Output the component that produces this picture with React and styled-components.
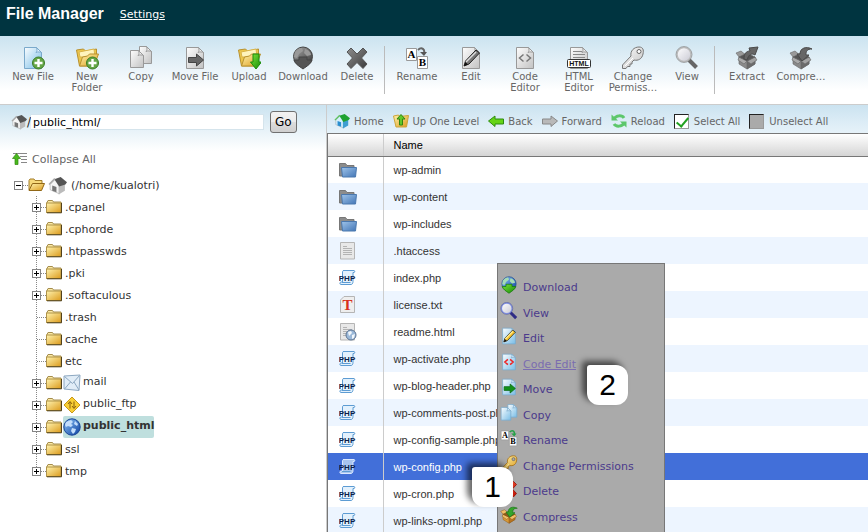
import React from 'react';
import styled, { createGlobalStyle } from 'styled-components';

const GlobalStyle = createGlobalStyle`
    * { box-sizing: border-box; }
    body {
        margin: 0;
        background: #fff;
        color: #333;
        font-family: Verdana, "DejaVu Sans", sans-serif;
        font-size: 11px;
    }
    button, input {
        font-family: inherit;
    }
`;

const Page = styled.div`
    display: flex;
    flex-direction: column;
    height: 100vh;
    overflow: hidden;
`;

const Header = styled.header`
    display: flex;
    flex: none;
    align-items: center;
    gap: 16px;
    height: 36px;
    padding: 0 6px 8px;
    background: #003440;
    a {
        color: #fff;
    }
`;

const Title = styled.h1`
    margin: 0;
    color: #fff;
    font-family: "Liberation Sans", Arial, sans-serif;
    font-size: 16px;
    line-height: 20px;
`;

const Toolbar = styled.div`
    display: flex;
    flex: none;
    height: 69px;
    padding: 10px 6px 0;
    border-bottom: 1px solid #ccc;
    background: linear-gradient(#cbe3f0, #fff 80%);
`;

const ToolButton = styled.button`
    display: flex;
    flex: none;
    flex-direction: column;
    align-items: center;
    width: 54px;
    height: 48px;
    padding: 0;
    border: 0;
    background: none;
    color: #666;
    font-size: 10px;
    line-height: 11px;
    white-space: pre;
    cursor: pointer;
    svg {
        flex: none;
        margin-bottom: 1px;
    }
`;

const Separator = styled.span`
    width: 1px;
    height: 48px;
    margin-right: 5px;
    background: #bbb;
`;

const Main = styled.main`
    display: flex;
    flex: 1;
    min-height: 0;
`;

const Sidebar = styled.aside`
    flex: none;
    width: 326px;
    background: linear-gradient(#cbe3f0, #fff 46px);
`;

const PathForm = styled.form`
    display: flex;
    align-items: center;
    gap: 6px;
    height: 34px;
    padding-left: 11px;
    font-size: 12px;
    color: #222;
    label {
        display: flex;
        align-items: center;
    }
`;

const PathInput = styled.input`
    width: 233px;
    height: 16px;
    padding: 0 2px;
    border: 1px solid #d5e4ec;
    border-width: 1px 1px 1px 0;
    background: #fff;
    color: #000;
    font-size: 11px;
`;

const GoButton = styled.button`
    height: 22px;
    padding: 0 4px;
    border: 1px solid #707070;
    border-radius: 3px;
    background: linear-gradient(#f2f2f2, #ebebeb 50%, #ddd 50%, #cfcfcf);
    color: #000;
    font-size: 12px;
`;

const CollapseButton = styled.button`
    display: flex;
    align-items: center;
    gap: 4px;
    height: 16px;
    margin: 12px 0 7px 12px;
    padding: 0;
    border: 0;
    background: none;
    color: #666;
    font-size: 11px;
`;

const Tree = styled.ul`
    margin: 0;
    padding: 0 0 0 14px;
    list-style: none;
    ul {
        position: relative;
        margin: 0;
        padding: 0 0 0 18px;
        list-style: none;
    }
    ul::before {
        content: "";
        position: absolute;
        left: 22px;
        top: 0;
        bottom: 11px;
        border-left: 1px dotted #888;
    }
`;

const TreeRow = styled.div`
    position: relative;
    display: flex;
    align-items: center;
    height: 22px;
`;

const Toggle = styled.button`
    display: flex;
    align-items: center;
    justify-content: center;
    width: 9px;
    height: 9px;
    padding: 0;
    border: 1px solid #848484;
    background: #fff;
    visibility: ${props => (props.$hidden ? 'hidden' : 'visible')};
`;

const Branch = styled.span`
    width: ${props => (props.$leaf ? 9 : 5)}px;
    margin-left: ${props => (props.$leaf ? -4 : 0)}px;
    border-top: 1px dotted #888;
`;

const TreeLabel = styled.a`
    display: flex;
    align-items: center;
    height: 22px;
    margin-left: 1px;
    padding-left: ${props => (props.$icon ? 0 : 2)}px;
    border-radius: 2px;
    background: ${props => (props.$current ? '#bfdfde' : 'transparent')};
    color: #333;
    font-weight: ${props => (props.$current ? 'bold' : 'normal')};
    text-decoration: none;
    white-space: nowrap;
    svg {
        margin-right: 2px;
    }
    span {
        padding-bottom: ${props => (props.$icon ? 4 : 0)}px;
    }
`;

const RootLabel = styled.a`
    display: flex;
    align-items: center;
    gap: 4px;
    margin-left: 3px;
    color: #333;
    text-decoration: none;
`;

const Content = styled.section`
    position: relative;
    display: flex;
    flex: 1;
    flex-direction: column;
    min-width: 0;
    border-left: 1px solid #ccc;
`;

const ActionBar = styled.div`
    display: flex;
    flex: none;
    align-items: center;
    gap: 9px;
    height: 28px;
    padding: 4px 7px 0;
    background: linear-gradient(#cbe3f0, #dcecf6 60%, #e6f2f9);
    color: #666;
    font-size: 10px;
`;

const Action = styled.button`
    display: flex;
    flex: none;
    align-items: center;
    gap: 4px;
    padding: 0;
    border: 0;
    background: none;
    color: #666;
    font-size: 10px;
    white-space: nowrap;
`;

const CheckLabel = styled.label`
    display: flex;
    flex: none;
    align-items: center;
    gap: 5px;
    white-space: nowrap;
`;

const CheckBox = styled.input`
    appearance: none;
    position: relative;
    width: 15px;
    height: 15px;
    margin: 0;
    border: 1px solid;
    border-color: #222 #999 #999 #222;
    background: ${props => (props.$blank ? '#aaa' : '#fff')};
    &:checked::after {
        content: "";
        position: absolute;
        left: 4px;
        top: 0;
        width: 5px;
        height: 10px;
        border: solid #21a121;
        border-width: 0 2px 2px 0;
        transform: rotate(40deg);
    }
`;

const ListArea = styled.div`
    flex: 1;
    min-height: 0;
    overflow: hidden;
    border-top: 1px solid #777;
    border-left: 1px solid #777;
`;

const FileTable = styled.table`
    width: 100%;
    border-collapse: collapse;
    table-layout: fixed;
    font-family: "Liberation Sans", Arial, sans-serif;
    font-size: 11px;
    th, td {
        padding: 0 10px;
        text-align: left;
        font-weight: normal;
    }
    th:first-child, td:first-child {
        width: 55px;
        padding-left: 11px;
        border-right: 1px solid #ccc;
    }
    th {
        height: 22px;
        border-bottom: 1px solid #777;
        color: #000;
    }
    thead {
        background: linear-gradient(#fff, #d5d5d5);
    }
    svg {
        display: block;
    }
`;

const FileRow = styled.tr`
    height: 27px;
    background: #fff;
    color: #333;
    &:nth-child(even) {
        background: #edf5ff;
    }
    &&[aria-selected="true"] {
        background: #426fd9;
        color: #fff;
    }
`;

const ContextMenu = styled.ul`
    position: absolute;
    left: 170px;
    top: 158px;
    width: 168px;
    margin: 0;
    padding: 12px 2px 20px;
    border: 1px solid #777;
    background: #aaa;
    list-style: none;
    li {
        height: 26px;
    }
    li:nth-child(even) {
        height: 25px;
    }
`;

const MenuLink = styled.a`
    display: flex;
    align-items: flex-start;
    gap: 5px;
    color: ${props => (props.$active ? '#7a6db0' : '#4b3a8c')};
    text-decoration: ${props => (props.$active ? 'underline' : 'none')};
    line-height: 20px;
    white-space: nowrap;
    span {
        padding-top: 2px;
    }
`;

const Marker = styled.div`
    position: absolute;
    left: ${props => props.$x}px;
    top: ${props => props.$y}px;
    width: 41px;
    height: 40px;
    border-radius: 3px 12px 12px 12px;
    background: #fff;
    box-shadow: -5px -4px 6px rgba(0, 0, 0, 0.6);
    color: #000;
    font-family: "Liberation Sans", Arial, sans-serif;
    font-size: 30px;
    line-height: 40px;
    text-align: center;
`;

/* ---------- icons ---------- */

const Svg = ({ size = 24, box = 24, children }) => (
    <svg width={size} height={size} viewBox={`0 0 ${box} ${box}`} aria-hidden="true">{children}</svg>
);

const Gradient = ({ id, from, to }) => (
    <linearGradient id={id} x1="0" y1="0" x2="1" y2="1">
        <stop offset="0" stopColor={from} />
        <stop offset="1" stopColor={to} />
    </linearGradient>
);

const IconDefs = styled.svg`
    position: absolute;
`;

const Defs = () => (
    <IconDefs width="0" height="0" aria-hidden="true">
        <defs>
            <Gradient id="grayPage" from="#fdfdfd" to="#c2c2c2" />
            <Gradient id="bluePage" from="#fafdff" to="#79bde6" />
            <Gradient id="yellow" from="#fff3ae" to="#dc9b1c" />
            <Gradient id="blueFolder" from="#9fc4ea" to="#4275b5" />
            <Gradient id="grayBall" from="#aaa" to="#333" />
            <Gradient id="blueBall" from="#8fc7fa" to="#0a3d9e" />
            <Gradient id="green" from="#7be338" to="#168a08" />
            <Gradient id="dark" from="#8e8e8e" to="#3c3c3c" />
            <Gradient id="red" from="#ff6a48" to="#c00d00" />
            <Gradient id="lens" from="#fff" to="#c9c9d4" />
        </defs>
    </IconDefs>
);

const Sheet = ({ color, x = 3, y = 1, w = 18, h = 22 }) => (
    <g stroke={color ? '#7aa9cb' : '#999'} strokeWidth="1" strokeLinejoin="round">
        <path
            d={`M${x + 0.5} ${y + 0.5}h${w - 6}l5 5v${h - 6}h${1 - w}z`}
            fill={color ? 'url(#bluePage)' : 'url(#grayPage)'}
        />
        <path d={`M${x + w - 5.5} ${y + 0.5}c1 2 .5 4 -.5 5c2 -1 4 -.5 5.500 0z`} fill={color ? '#e4f4ff' : '#eee'} />
    </g>
);

const OpenFolder = () => (
    <g strokeLinejoin="round" stroke="#b8912f">
        <path d="M1.500 4l7-1 2 2 11-2v8l-3 9h-14z" fill="#edc64b" />
        <path d="M4 6l15-3 1 8H5z" fill="#fff4bd" stroke="#d9b44a" />
        <path d="M4.500 20l3-9 5-1 2-2h9l-4.500 12z" fill="url(#yellow)" />
    </g>
);

const PlusBadge = () => (
    <g>
        <circle cx="17.500" cy="17" r="6" fill="#65a646" stroke="#397c24" />
        <path d="M17.500 13v8M13.500 17h8" stroke="#fff" strokeWidth="2.400" />
    </g>
);

const Pencil = ({ color }) => (
    <g strokeLinejoin="round">
        <path d="M5 20l1.500-5L17 4l3.500 3L10 18z" fill={color ? '#f8c42e' : '#777'} stroke="#222" />
        <path d="M7 16l10-10" stroke={color ? '#fff09b' : '#ddd'} strokeWidth="1.500" />
        <path d="M5 20l1.500-4 2.500 2.500z" fill="#111" />
    </g>
);

const NewFileIcon = () => <Svg><Sheet color /><PlusBadge /></Svg>;
const NewFolderIcon = () => <Svg><OpenFolder /><PlusBadge /></Svg>;
const CopyIcon = ({ color, size }) => (
    <Svg size={size}>
        <Sheet color={color} x={10} y={0} w={13} h={18} />
        <Sheet color={color} x={1} y={4} w={14} h={18} />
    </Svg>
);
const MoveIcon = ({ color, size }) => (
    <Svg size={size}>
        <Sheet color={color} />
        <path d="M5.500 11.500h8v-3.500l7 6-7 6v-3.500h-8z" fill={color ? '#12921b' : '#666'} stroke={color ? '#0a6810' : '#444'} />
    </Svg>
);
const UploadIcon = () => (
    <Svg>
        <OpenFolder />
        <path d="M16 8h6v8h2.500l-5.500 7-5.500-7H16z" fill="url(#green)" stroke="#1d8b0c" />
    </Svg>
);
const DownloadIcon = ({ color, size }) => (
    <Svg size={size}>
        <circle cx="12" cy="10.500" r="9.500" fill={color ? 'url(#blueBall)' : 'url(#grayBall)'} stroke={color ? '#24508e' : '#444'} />
        <path d="M4 6c3-4 6-4 7-4l1 3-4 3-2 4-3-1zM14 3c4 1 6 4 6 6l-4 1-3-3z" fill={color ? '#a6dcb4' : '#999'} />
        <path d="M3 14h5v-3h8v3h5c-1 4-5 6-9 9c-4-3-8-5-9-9z" fill={color ? 'url(#green)' : '#555'} stroke={color ? '#167a0c' : '#444'} />
    </Svg>
);
const DeleteIcon = ({ color, size }) => (
    <Svg size={size}>
        <path
            d="M6 2l6 6 6-6 4 4-5.500 6 5.500 6-4 4.500-6-6-6 6L2 18l5.500-6L2 6z"
            fill={color ? 'url(#red)' : 'url(#dark)'} stroke={color ? '#8e0b00' : '#555'} strokeLinejoin="round"
        />
    </Svg>
);
const RenameIcon = ({ color, size }) => (
    <Svg size={size}>
        <path d="M1.500 2.500h10v12h-10zM12.500 10.500h10v12h-10z" fill="#fff" stroke="#999" />
        <path d="M13 4c4-4 7 0 6 3" fill="none" stroke={color ? '#25a246' : '#666'} strokeWidth="2" />
        <path d="M15 6h7l-3 4z" fill={color ? '#25a246' : '#555'} />
        <g fontFamily="Liberation Serif, serif" fontWeight="bold" fontSize="11" textAnchor="middle" fill="#000">
            <text x="6.500" y="12">A</text>
            <text x="17.500" y="20">B</text>
        </g>
    </Svg>
);
const EditIcon = ({ color, size }) => <Svg size={size}><Sheet color={color} /><Pencil color={color} /></Svg>;
const CodeIcon = ({ color, size }) => (
    <Svg size={size}>
        <Sheet color={color} />
        <path d="M10.500 8.500l-4 3.500 4 3.500M13.500 8.500l4 3.500-4 3.500" fill="none" stroke={color ? '#e22' : '#777'} strokeWidth={color ? 2 : 1.500} />
    </Svg>
);
const HtmlIcon = () => (
    <Svg>
        <Sheet />
        <path d="M6 5.500h9M6 8.500h12M6 11.500h12" stroke="#888" />
        <rect x=".5" y="13.500" width="23" height="8" rx="1" fill="#fff" stroke="#333" />
        <text x="12" y="20" textAnchor="middle" fontFamily="Liberation Sans, sans-serif" fontWeight="bold" fontSize="7" fill="#111">HTML</text>
    </Svg>
);
const KeyIcon = ({ color, size }) => (
    <Svg size={size}>
        <path
            d="M10 10c-1-5 3-9 8-9 4 0 5 3 4 7-1 5-5 7-9 6l-2 2v2H9v2.500H6.500L5 22.500H1.500V19z"
            fill={color ? 'url(#yellow)' : 'url(#grayPage)'} stroke={color ? '#a26a0c' : '#777'} strokeLinejoin="round"
        />
        <circle cx="18" cy="5.500" r="2" fill={color ? '#aaa' : '#fff'} stroke="#666" />
        <path d="M4 20l8-8" stroke={color ? '#fff0a0' : '#fff'} />
    </Svg>
);
const ViewIcon = ({ color, size }) => (
    <Svg size={size}>
        <path d="M14 14l7.500 7.500" stroke={color ? '#2f2c85' : '#666'} strokeWidth="4" />
        <circle cx="9" cy="8.500" r="7" fill="url(#lens)" stroke={color ? '#8292e6' : '#bbb'} strokeWidth="1.500" />
        <circle cx="9" cy="8.500" r="8" fill="none" stroke={color ? '#4b55a0' : '#888'} strokeWidth=".7" />
    </Svg>
);
const BoxIcon = ({ color, out, size }) => (
    <Svg size={size}>
        <g strokeLinejoin="round" strokeWidth=".6" stroke={color ? '#875311' : '#666'}>
            <path d="M4 11l8 4 8-4v7l-8 5-8-5z" fill={color ? '#d89a38' : '#8a8a8a'} />
            <path d="M12 15l8-4v7l-8 5z" fill={color ? '#b87420' : '#6b6b6b'} />
            <path d="M4 11L1 7l5-2 6 5z" fill={color ? '#f0be68' : '#999'} />
            <path d="M4 11l-1 3 6 4 3-3z" fill={color ? '#f0be68' : '#aaa'} />
            <path d="M20 11l2 3-6 4-4-3z" fill={color ? '#f0be68' : '#a2a2a2'} />
            <path d="M4 11l8-4 8 4-8 4z" fill={color ? '#8d5a1a' : '#555'} />
        </g>
        {out
            ? <path d="M9 13c0-5 2-8 6-8l-1-3 9-1-3 8-2-1c-4 0-5 3-6 6z" fill="#666" stroke="#4a4a4a" />
            : <path d="M23 3c-5 0-6 2-6 6h3l-7 6-5-7h3c0-6 6-8 12-5z" fill={color ? '#35a52c' : '#666'} stroke={color ? '#1c7b18' : '#4a4a4a'} />}
    </Svg>
);

const HouseIcon = ({ size = 18, color }) => (
    <Svg size={size} box={18}>
        <path d="M2 8l5-5 4 5v9l-9-4z" fill={color ? '#d4effc' : '#f5f5f5'} stroke="#999" strokeWidth=".5" />
        <path d="M10 9l6-2v7l-6 3.500z" fill={color ? '#3f9ed0' : '#bbb'} />
        <path d="M4 9l4 1.500v5L4 14z" fill={color ? '#2a8ed0' : '#777'} />
        <path d="M6 3l6-2 6 5-1.500 2-6 2z" fill={color ? '#1fa331' : '#555'} />
        <path d="M6.500 2.500L1 8" stroke={color ? '#5cc45f' : '#aaa'} strokeWidth="1.500" />
    </Svg>
);

const FolderIcon = () => (
    <svg width="16" height="14" viewBox="0 0 16 14" aria-hidden="true">
        <path d="M1 2.500l1-2h4.500l1 1.500H15v2H1z" fill="#fbe9a4" stroke="#a58d4e" />
        <rect x=".5" y="3" width="14.500" height="9.500" fill="url(#yellow)" stroke="#b09349" />
        <path d="M1 12.800h14.500V3" fill="none" stroke="#51411b" />
    </svg>
);

const OpenFolderSmall = () => (
    <svg width="17" height="14" viewBox="0 0 17 14" aria-hidden="true">
        <path d="M1 12V2.500l1-1.500h4l1 1.500h7V6" fill="#f6d97a" stroke="#a37d2b" />
        <path d="M1 12.500L4.500 5.500h12L13.500 12.500z" fill="url(#yellow)" stroke="#916716" strokeLinejoin="round" />
    </svg>
);

const MailIcon = () => (
    <Svg size={18} box={18}>
        <path d="M1 2l16-1-1 15.500L1 15z" fill="#e1edf7" stroke="#8da8c1" />
        <path d="M1.500 2.500l8 7L16.500 1.500M1.500 15l6-7M16 16l-5-8" fill="none" stroke="#8da8c1" />
    </Svg>
);
const FtpIcon = () => (
    <Svg size={18} box={18}>
        <path d="M9 1l8 8-8 8-8-8z" fill="#f9cf36" stroke="#c89818" strokeLinejoin="round" />
        <path d="M7 12.500V6M5 8l2-2.500L9 8M11 5.500V12M9 10l2 2.500 2-2.500" fill="none" stroke="#8a5f0b" />
    </Svg>
);
const GlobeIcon = () => (
    <Svg size={18} box={18}>
        <circle cx="9" cy="9" r="8.200" fill="url(#blueBall)" stroke="#174395" />
        <path d="M3 4l5-2 2 2-2 2 2 1-2 2-3-1-2 1-1-2zM9 10l4 1-1 3-2 2-2-3zM12 3l3 3-1 2-3-2z" fill="#c4defc" />
    </Svg>
);

const BlueFolderIcon = () => (
    <svg width="18" height="16" viewBox="0 0 18 16" aria-hidden="true">
        <path d="M.5 14V1.500h6l1.500 2h7V14z" fill="#8c8c8c" stroke="#777" />
        <path d="M2.500 5.500h15l-1 9.500h-13z" fill="url(#blueFolder)" stroke="#4a78ae" />
    </svg>
);
const PhpIcon = ({ selected }) => (
    <Svg size={17} box={17}>
        <path d="M4 1.500h11c1 0 1 2 0 2h-1v9c0 2-1 3-2 3H2c-1.500 0-1.500-2.500 0-2.500h1.500V3c0-1 .5-1.500 1.500-1.500z" fill={selected ? '#a8c4ef' : '#e3f1fd'} stroke={selected ? '#dbe8ff' : '#5d9cd3'} />
        <path d="M3 13.500h8.500" stroke="#5d9cd3" />
        <text x="8" y="11.500" textAnchor="middle" fontFamily="Liberation Sans, sans-serif" fontWeight="bold" fontSize="8" fill="#0b1d4b">PHP</text>
    </Svg>
);
const TextIcon = () => (
    <Svg size={17} box={17}>
        <path d="M5 .5h10.500v16H1.500V4z" fill="#eee" stroke="#b5b5b5" />
        <text x="8.500" y="14" textAnchor="middle" fontFamily="Liberation Serif, serif" fontWeight="bold" fontSize="15" fill="#d9301a">T</text>
    </Svg>
);
const LinesIcon = ({ globe }) => (
    <Svg size={18} box={18}>
        <path d="M1.500 .5h14v16.500h-14z" fill="#e8e8e8" stroke="#b5b5b5" />
        <path d="M4 4.500h4M4 6.500h9M4 8.500h9M4 10.500h9M4 12.500h9" stroke="#b3b3b3" />
        {globe && <circle cx="12" cy="12" r="5" fill="#9bb9d9" stroke="#5d7594" />}
        {globe && <path d="M9 9l3-1 1 2-3 3zM13 12l3-1-1 4-2 1z" fill="#f1f6fb" />}
    </Svg>
);

const ArrowIcon = ({ back }) => (
    <Svg size={16} box={16}>
        {back
            ? <path d="M.5 8L7 3v3h8.500v5H7v2.500z" fill="#65d416" stroke="#2e8b0f" strokeLinejoin="round" />
            : <path d="M15.500 8L9 3v3H.5v5H9v2.500z" fill="#b9b9b9" stroke="#888" strokeLinejoin="round" />}
    </Svg>
);
const UpIcon = () => (
    <Svg size={16} box={16}>
        <path d="M.5 3l5-1 1 1.500 9-1-2 11.500H3z" fill="url(#yellow)" stroke="#cda53a" />
        <path d="M8 1.500l4 4.500H9.500v6h-3V6H4z" fill="#61c926" stroke="#308512" />
    </Svg>
);
const ReloadIcon = () => (
    <Svg size={16} box={16}>
        <path d="M3 6c2-4 8-4 10-1M13 10c-2 4-8 4-10 1" fill="none" stroke="#5dc76b" strokeWidth="3" />
        <path d="M.5 1.500L7 7.500H.5zM15.500 14.500L9 8.500h6.500z" fill="#5dc76b" />
    </Svg>
);
const CollapseIcon = () => (
    <Svg size={16} box={16}>
        <path d="M1 2.500h14M8 5.500h7M9 8.500h6M9 11.500h6" stroke="#888" />
        <path d="M4.500 2.500l4 5H6v6H3v-6H.5z" fill="#49b91c" stroke="#32870f" strokeWidth=".7" />
    </Svg>
);

/* ---------- data ---------- */

const tools = [
    [
        { label: 'New File', icon: <NewFileIcon /> },
        { label: 'New\nFolder', icon: <NewFolderIcon /> },
        { label: 'Copy', icon: <CopyIcon /> },
        { label: 'Move File', icon: <MoveIcon /> },
        { label: 'Upload', icon: <UploadIcon /> },
        { label: 'Download', icon: <DownloadIcon /> },
        { label: 'Delete', icon: <DeleteIcon /> }
    ],
    [
        { label: 'Rename', icon: <RenameIcon /> },
        { label: 'Edit', icon: <EditIcon /> },
        { label: 'Code\nEditor', icon: <CodeIcon /> },
        { label: 'HTML\nEditor', icon: <HtmlIcon /> },
        { label: 'Change\nPermiss…', icon: <KeyIcon /> },
        { label: 'View', icon: <ViewIcon /> }
    ],
    [
        { label: 'Extract', icon: <BoxIcon out /> },
        { label: 'Compre…', icon: <BoxIcon /> }
    ]
];

const folders = [
    { name: '.cpanel' },
    { name: '.cphorde' },
    { name: '.htpasswds' },
    { name: '.pki' },
    { name: '.softaculous' },
    { name: '.trash', leaf: true },
    { name: 'cache', leaf: true },
    { name: 'etc', leaf: true },
    { name: 'mail', icon: <MailIcon /> },
    { name: 'public_ftp', icon: <FtpIcon /> },
    { name: 'public_html', icon: <GlobeIcon />, current: true },
    { name: 'ssl' },
    { name: 'tmp' }
];

const actions = [
    { label: 'Home', icon: <HouseIcon size={16} color /> },
    { label: 'Up One Level', icon: <UpIcon /> },
    { label: 'Back', icon: <ArrowIcon back /> },
    { label: 'Forward', icon: <ArrowIcon /> },
    { label: 'Reload', icon: <ReloadIcon /> }
];

const files = [
    'wp-admin', 'wp-content', 'wp-includes', '.htaccess', 'index.php', 'license.txt', 'readme.html',
    'wp-activate.php', 'wp-blog-header.php', 'wp-comments-post.php', 'wp-config-sample.php',
    'wp-config.php', 'wp-cron.php', 'wp-links-opml.php'
];

const menu = [
    { label: 'Download', Icon: DownloadIcon },
    { label: 'View', Icon: ViewIcon },
    { label: 'Edit', Icon: EditIcon },
    { label: 'Code Edit', Icon: CodeIcon },
    { label: 'Move', Icon: MoveIcon },
    { label: 'Copy', Icon: CopyIcon },
    { label: 'Rename', Icon: RenameIcon },
    { label: 'Change Permissions', Icon: KeyIcon },
    { label: 'Delete', Icon: DeleteIcon },
    { label: 'Compress', Icon: BoxIcon }
];

const getFileIcon = (name, selected) => {
    if (name.endsWith('.php')) return <PhpIcon selected={selected} />;
    if (name.endsWith('.txt')) return <TextIcon />;
    if (name.endsWith('.html')) return <LinesIcon globe />;
    if (name === '.htaccess') return <LinesIcon />;
    return <BlueFolderIcon />;
};

const ToggleSign = ({ open }) => (
    <svg width="7" height="7" viewBox="0 0 7 7" aria-hidden="true">
        <path d={open ? 'M1 3.500h5' : 'M1 3.500h5M3.500 1v5'} stroke="#000" />
    </svg>
);

const FolderTree = () => (
    <Tree>
        <li>
            <TreeRow>
                <Toggle type="button" aria-label="Collapse home"><ToggleSign open /></Toggle>
                <Branch />
                <OpenFolderSmall />
                <RootLabel href="#home"><HouseIcon size={19} />(/home/kualotri)</RootLabel>
            </TreeRow>
            <ul>
                {folders.map(item => (
                    <li key={item.name}>
                        <TreeRow>
                            <Toggle type="button" $hidden={item.leaf} aria-label={'Expand ' + item.name}><ToggleSign /></Toggle>
                            <Branch $leaf={item.leaf} />
                            <FolderIcon />
                            <TreeLabel href={'#' + item.name} $icon={!!item.icon} $current={item.current}>
                                {item.icon}<span>{item.name}</span>
                            </TreeLabel>
                        </TreeRow>
                    </li>
                ))}
            </ul>
        </li>
    </Tree>
);

const App = () => {
    const [selected, setSelected] = React.useState('wp-config.php');
    const [path, setPath] = React.useState('public_html/');

    return <Page>
        <GlobalStyle />
        <Defs />
        <Header>
            <Title>File Manager</Title>
            <a href="#settings">Settings</a>
        </Header>
        <Toolbar>
            {tools.map((group, i) => (
                <React.Fragment key={i}>
                    {i > 0 && <Separator />}
                    {group.map(tool => (
                        <ToolButton key={tool.label} type="button">{tool.icon}{tool.label}</ToolButton>
                    ))}
                </React.Fragment>
            ))}
        </Toolbar>
        <Main>
            <Sidebar>
                <PathForm onSubmit={e => e.preventDefault()}>
                    <label>
                        <HouseIcon size={16} />/
                        <PathInput aria-label="Path" value={path} onChange={e => setPath(e.target.value)} />
                    </label>
                    <GoButton type="submit">Go</GoButton>
                </PathForm>
                <CollapseButton type="button"><CollapseIcon />Collapse All</CollapseButton>
                <FolderTree />
            </Sidebar>
            <Content>
                <ActionBar>
                    {actions.map(item => (
                        <Action key={item.label} type="button">{item.icon}{item.label}</Action>
                    ))}
                    <CheckLabel><CheckBox type="checkbox" defaultChecked />Select All</CheckLabel>
                    <CheckLabel><CheckBox type="checkbox" $blank />Unselect All</CheckLabel>
                </ActionBar>
                <ListArea>
                    <FileTable>
                        <thead>
                            <tr><th aria-label="Type" /><th>Name</th></tr>
                        </thead>
                        <tbody>
                            {files.map(name => (
                                <FileRow key={name} aria-selected={name === selected} onClick={() => setSelected(name)}>
                                    <td>{getFileIcon(name, name === selected)}</td>
                                    <td>{name}</td>
                                </FileRow>
                            ))}
                        </tbody>
                    </FileTable>
                </ListArea>
                <ContextMenu>
                    {menu.map(({ label, Icon }) => (
                        <li key={label}>
                            <MenuLink href="#menu" $active={label === 'Code Edit'}><Icon size={18} color /><span>{label}</span></MenuLink>
                        </li>
                    ))}
                </ContextMenu>
                <Marker $x={145} $y={362}>1</Marker>
                <Marker $x={260} $y={260}>2</Marker>
            </Content>
        </Main>
    </Page>
};

export default App;
